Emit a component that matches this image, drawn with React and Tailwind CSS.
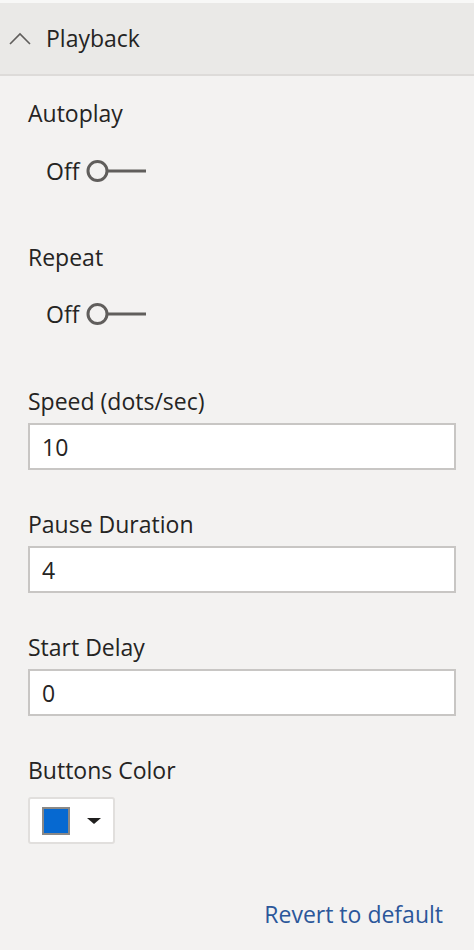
import { useState } from "react";

function Toggle({ on }) {
  return (
    <div className="flex items-center h-[24px] pl-[18px]">
      <span className="text-[23px] text-[#252423] mr-[7px] leading-[24px]">{on ? "On" : "Off"}</span>
      <svg width="62" height="24" viewBox="0 0 62 24">
        <circle cx="11.5" cy="12" r="9.5" fill="none" stroke="#605e5c" strokeWidth="3" />
        <line x1="21" y1="12" x2="60" y2="12" stroke="#605e5c" strokeWidth="3" />
      </svg>
    </div>
  );
}

function NumField({ label, value }) {
  return (
    <div className="flex flex-col">
      <div className="text-[23px] text-[#252423] leading-[30px] h-[30px]">{label}</div>
      <input
        defaultValue={value}
        className="mt-[7px] w-[428px] h-[47px] bg-white border-2 border-[#c8c6c4] px-[12px] text-[23px] text-[#252423] outline-none"
      />
    </div>
  );
}

export default function App() {
  const [autoplay] = useState(false);
  const [repeat] = useState(false);

  return (
    <div
      className="w-[474px] h-[950px] bg-[#f3f2f1] overflow-hidden"
      style={{ fontFamily: '"Open Sans", "Noto Sans", sans-serif' }}
    >
      <div className="h-[3px] bg-[#f8f8f7]" />
      <div className="h-[71px] bg-[#eae9e7] flex items-center pl-[8px]">
        <svg width="26" height="16" viewBox="0 0 26 16" className="mr-[12px]">
          <polyline points="2,13 12,3 22,13" fill="none" stroke="#605e5c" strokeWidth="1.6" />
        </svg>
        <span className="text-[23px] text-[#252423]">Playback</span>
      </div>
      <div className="h-[2px] bg-[#dddbd9]" />

      <div className="px-[28px]">
        <div className="mt-[22px] text-[23px] text-[#252423] leading-[30px]">Autoplay</div>
        <div className="mt-[31px]">
          <Toggle on={autoplay} />
        </div>

        <div className="mt-[59px] text-[23px] text-[#252423] leading-[30px]">Repeat</div>
        <div className="mt-[30px]">
          <Toggle on={repeat} />
        </div>

        <div className="mt-[60px] flex flex-col gap-[39px]">
          <NumField label="Speed (dots/sec)" value="10" />
          <NumField label="Pause Duration" value="4" />
          <NumField label="Start Delay" value="0" />
        </div>

        <div className="mt-[39px] text-[23px] text-[#252423] leading-[30px]">Buttons Color</div>
        <div className="mt-[12px] w-[87px] h-[47px] bg-white border-2 border-[#e1dfdd] rounded-[3px] flex items-center pl-[12px]">
          <div className="w-[28px] h-[28px] bg-[#0669d1] border-2 border-[#8a8886]" />
          <svg width="16" height="8" viewBox="0 0 16 8" className="ml-[16px]">
            <polygon points="1,1 15,1 8,7" fill="#201f1e" />
          </svg>
        </div>

        <div className="mt-[55px] flex justify-end pr-[3px]">
          <span className="text-[23px] text-[#2b579a] leading-[30px]">Revert to default</span>
        </div>
      </div>
    </div>
  );
}
